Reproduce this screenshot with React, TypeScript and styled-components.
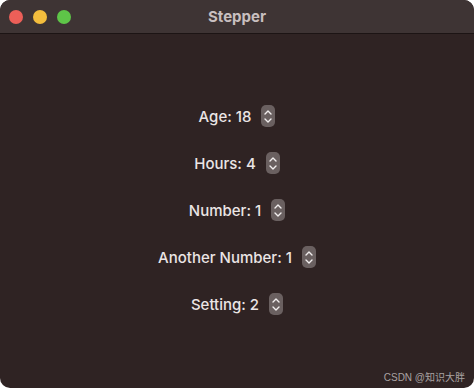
import React from 'react';
import styled, { createGlobalStyle } from 'styled-components';

const Global = createGlobalStyle`
  html, body {
    margin: 0;
    padding: 0;
    background: #ffffff;
  }
  body {
    font-family: Inter, "Noto Sans", "Noto Sans CJK SC", sans-serif;
  }
`;

const Window = styled.div`
  width: 474px;
  height: 388px;
  border-radius: 10px;
  overflow: hidden;
  background: #2f2323;
  display: flex;
  flex-direction: column;
  position: relative;
`;

const TitleBar = styled.div`
  height: 33px;
  flex: none;
  background: #3e3434;
  border-bottom: 1px solid #1c1414;
  display: flex;
  align-items: center;
  position: relative;
  padding-left: 9px;
  gap: 10px;
`;

const Light = styled.span<{ $color: string }>`
  width: 14px;
  height: 14px;
  border-radius: 50%;
  background: ${(p) => p.$color};
`;

const Title = styled.div`
  position: absolute;
  left: 0;
  right: 0;
  top: 0;
  bottom: 0;
  display: flex;
  align-items: center;
  justify-content: center;
  font-size: 15px;
  font-weight: 700;
  color: #c8bfbf;
  pointer-events: none;
`;

const Content = styled.div`
  flex: 1;
  display: flex;
  flex-direction: column;
  align-items: center;
  justify-content: center;
  gap: 25px;
  padding-bottom: 2px;
`;

const Row = styled.div`
  display: flex;
  align-items: center;
  gap: 10px;
  height: 22px;
`;

const Label = styled.span`
  font-size: 15px;
  font-weight: 500;
  color: #ebe5e5;
`;

const Stepper = styled.div`
  width: 14px;
  height: 22px;
  border-radius: 5px;
  background: #6a6060;
  display: flex;
  flex-direction: column;
  align-items: center;
  justify-content: center;
  gap: 3px;
`;

const Watermark = styled.div`
  position: absolute;
  right: 9px;
  bottom: 4px;
  font-size: 10px;
  color: #a9a2a2;
  font-family: "Liberation Sans", "Noto Sans CJK SC", sans-serif;
`;

const Chevron = ({ up }: { up?: boolean }) => (
  <svg width="8" height="5" viewBox="0 0 8 5">
    <path
      d={up ? 'M1 4 L4 1 L7 4' : 'M1 1 L4 4 L7 1'}
      fill="none"
      stroke="#f2eeee"
      strokeWidth="1.4"
      strokeLinecap="round"
      strokeLinejoin="round"
    />
  </svg>
);

const rows = ['Age: 18', 'Hours: 4', 'Number: 1', 'Another Number: 1', 'Setting: 2'];

export default function App() {
  return (
    <>
      <Global />
      <Window>
        <TitleBar>
          <Light $color="#ec5f58" />
          <Light $color="#f3bd3d" />
          <Light $color="#5ec548" />
          <Title>Stepper</Title>
        </TitleBar>
        <Content>
          {rows.map((r) => (
            <Row key={r}>
              <Label>{r}</Label>
              <Stepper>
                <Chevron up />
                <Chevron />
              </Stepper>
            </Row>
          ))}
        </Content>
        <Watermark>CSDN @知识大胖</Watermark>
      </Window>
    </>
  );
}
